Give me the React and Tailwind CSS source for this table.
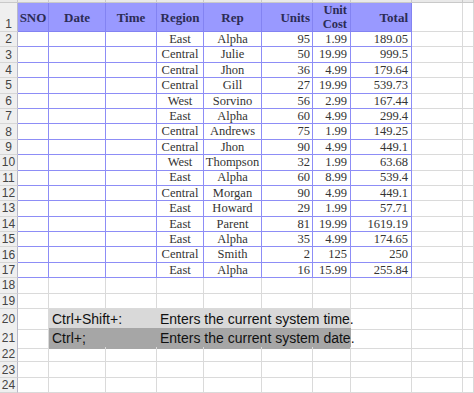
import React from 'react';

const GRID = 'grid grid-cols-[18px_31px_57px_51px_47px_58px_51px_38px_61px_51px_1fr]';
const SERIF = { fontFamily: '"Liberation Serif", "Times New Roman", serif' };

const ROWS = [
  ['East', 'Alpha', '95', '1.99', '189.05'],
  ['Central', 'Julie', '50', '19.99', '999.5'],
  ['Central', 'Jhon', '36', '4.99', '179.64'],
  ['Central', 'Gill', '27', '19.99', '539.73'],
  ['West', 'Sorvino', '56', '2.99', '167.44'],
  ['East', 'Alpha', '60', '4.99', '299.4'],
  ['Central', 'Andrews', '75', '1.99', '149.25'],
  ['Central', 'Jhon', '90', '4.99', '449.1'],
  ['West', 'Thompson', '32', '1.99', '63.68'],
  ['East', 'Alpha', '60', '8.99', '539.4'],
  ['Central', 'Morgan', '90', '4.99', '449.1'],
  ['East', 'Howard', '29', '1.99', '57.71'],
  ['East', 'Parent', '81', '19.99', '1619.19'],
  ['East', 'Alpha', '35', '4.99', '174.65'],
  ['Central', 'Smith', '2', '125', '250'],
  ['East', 'Alpha', '16', '15.99', '255.84'],
];

function RowHead({ n, bottom = false }) {
  return (
    <div
      className={`flex justify-center ${bottom ? 'items-end pb-[1px]' : 'items-center'} bg-[#efefef] border-r border-b border-r-[#b9b9c9] border-b-[#d6d6d6] text-[12px] leading-none text-[#444]`}
      style={{ fontFamily: '"Liberation Sans", Arial, sans-serif' }}
    >
      {n}
    </div>
  );
}

function Blank({ blue = false }) {
  return <div className={`border-r border-b ${blue ? 'border-[#8d8df6]' : 'border-[#dadada]'}`} />;
}

function TopStrip() {
  return (
    <div className={`${GRID} h-[3px]`}>
      {Array.from({ length: 11 }).map((_, i) => (
        <div key={i} className="bg-[#e9e9e9] border-r border-b border-[#c9c9c9]" />
      ))}
    </div>
  );
}

function HeaderRow() {
  const heads = [
    ['SNO', 'justify-center'],
    ['Date', 'justify-center'],
    ['Time', 'justify-center'],
    ['Region', 'justify-center'],
    ['Rep', 'justify-center'],
    ['Units', 'justify-end pr-[2px]'],
    ['Unit|Cost', 'justify-end pr-[3px]'],
    ['Total', 'justify-end pr-[3px]'],
  ];
  return (
    <div className={`${GRID} h-[29px]`}>
      <RowHead n="1" bottom />
      {heads.map(([t, cls]) => (
        <div
          key={t}
          className={`flex items-center ${cls} bg-[#9999ff] border-r border-b border-[#8383f2] text-[13px] font-bold text-[#2c2c55]`}
          style={SERIF}
        >
          {t.includes('|') ? (
            <div className="flex flex-col items-end leading-[14px] text-[12.5px]">
              <span>Unit</span>
              <span>Cost</span>
            </div>
          ) : (
            <span className="leading-none">{t}</span>
          )}
        </div>
      ))}
      <Blank />
      <Blank />
    </div>
  );
}

function DataRow({ n, r }) {
  const cell = 'flex items-center border-r border-b border-[#8d8df6] text-[12.5px] leading-none text-[#333] whitespace-nowrap';
  return (
    <div className={`${GRID} h-[15.4px]`} style={SERIF}>
      <RowHead n={n} />
      <Blank blue />
      <Blank blue />
      <Blank blue />
      <div className={`${cell} justify-center`}>{r[0]}</div>
      <div className={`${cell} justify-center`}>{r[1]}</div>
      <div className={`${cell} justify-end pr-[2px]`}>{r[2]}</div>
      <div className={`${cell} justify-end pr-[3px]`}>{r[3]}</div>
      <div className={`${cell} justify-end pr-[3px]`}>{r[4]}</div>
      <Blank />
      <Blank />
    </div>
  );
}

function EmptyRow({ n }) {
  return (
    <div className={`${GRID} h-[15.4px]`}>
      <RowHead n={n} />
      {Array.from({ length: 10 }).map((_, i) => (
        <Blank key={i} />
      ))}
    </div>
  );
}

function NoteRow({ n, fill, keys, text }) {
  return (
    <div className={`${GRID} h-[19px]`}>
      <RowHead n={n} />
      <Blank />
      <div
        className={`col-span-6 grid grid-cols-[108px_1fr] items-center ${fill} text-[14px] text-[#111] whitespace-nowrap`}
        style={{ fontFamily: '"Liberation Sans", Arial, sans-serif' }}
      >
        <span className="pl-[3px]">{keys}</span>
        <span className="pl-[3px]">{text}</span>
      </div>
      <Blank />
      <Blank />
      <Blank />
    </div>
  );
}

export default function App() {
  return (
    <div className="w-[474px] h-[393px] overflow-hidden bg-white">
      <TopStrip />
      <HeaderRow />
      {ROWS.map((r, i) => (
        <DataRow key={i} n={i + 2} r={r} />
      ))}
      <EmptyRow n={18} />
      <EmptyRow n={19} />
      <NoteRow n={20} fill="bg-[#d9d9d9]" keys="Ctrl+Shift+:" text="Enters the current system time." />
      <NoteRow n={21} fill="bg-[#a6a6a6]" keys="Ctrl+;" text="Enters the current system date." />
      <EmptyRow n={22} />
      <EmptyRow n={23} />
      <EmptyRow n={24} />
    </div>
  );
}
